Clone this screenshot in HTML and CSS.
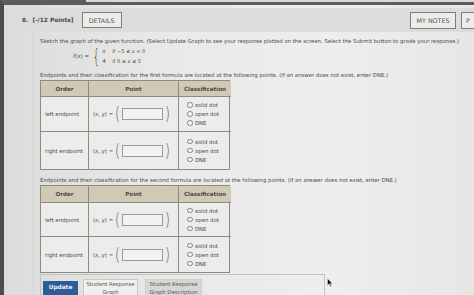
FILE: index.html
```html
<!DOCTYPE html>
<html>
<head>
<meta charset="utf-8">
<link rel="stylesheet" href="styles.css">
</head>
<body>
<div class="screen">
  <div class="topglare"></div>
  <div class="question">
    <div class="qhead">
      <span class="qnum">8.&nbsp; [-/12 Points]</span>
      <span class="btn details">DETAILS</span>
      <span class="spacer"></span>
      <span class="btn notes">MY NOTES</span>
      <span class="btn pbtn">P</span>
    </div>
    <div class="content">
      <p class="line first">Sketch the graph of the given function. (Select Update Graph to see your response plotted on the screen. Select the Submit button to grade your response.)</p>
      <div class="formula">
        <span class="fx"><i>f</i>(<i>x</i>) =</span>
        <span class="brace">{</span>
        <div class="cases">
          <div class="case"><span class="cv"><i>x</i></span><span class="cc">if &minus;5 &le; <i>x</i> &lt; 0</span></div>
          <div class="case"><span class="cv">4</span><span class="cc">if 0 &le; <i>x</i> &le; 5</span></div>
        </div>
      </div>
      <p class="line">Endpoints and their classification for the first formula are located at the following points. (If an answer does not exist, enter DNE.)</p>
      <div class="tbl">
        <div class="th c1">Order</div><div class="th c2">Point</div><div class="th c3">Classification</div>
        <div class="td c1 r1">left endpoint</div>
        <div class="td c2 r1"><span class="xy">(<i>x</i>, <i>y</i>) =</span><span class="par">(</span><span class="box"></span><span class="par">)</span></div>
        <div class="td c3 r1 radios"><span class="rad"><b></b>solid dot</span><span class="rad"><b></b>open dot</span><span class="rad"><b></b>DNE</span></div>
        <div class="td c1 r2">right endpoint</div>
        <div class="td c2 r2"><span class="xy">(<i>x</i>, <i>y</i>) =</span><span class="par">(</span><span class="box"></span><span class="par">)</span></div>
        <div class="td c3 r2 radios"><span class="rad"><b></b>solid dot</span><span class="rad"><b></b>open dot</span><span class="rad"><b></b>DNE</span></div>
      </div>
      <p class="line second">Endpoints and their classification for the second formula are located at the following points. (If an answer does not exist, enter DNE.)</p>
      <div class="tbl t2">
        <div class="th c1">Order</div><div class="th c2">Point</div><div class="th c3">Classification</div>
        <div class="td c1 r1">left endpoint</div>
        <div class="td c2 r1"><span class="xy">(<i>x</i>, <i>y</i>) =</span><span class="par">(</span><span class="box"></span><span class="par">)</span></div>
        <div class="td c3 r1 radios"><span class="rad"><b></b>solid dot</span><span class="rad"><b></b>open dot</span><span class="rad"><b></b>DNE</span></div>
        <div class="td c1 r2">right endpoint</div>
        <div class="td c2 r2"><span class="xy">(<i>x</i>, <i>y</i>) =</span><span class="par">(</span><span class="box"></span><span class="par">)</span></div>
        <div class="td c3 r2 radios"><span class="rad"><b></b>solid dot</span><span class="rad"><b></b>open dot</span><span class="rad"><b></b>DNE</span></div>
      </div>
      <div class="graphbar">
        <span class="update">Update</span>
        <span class="gbtn srg">Student Response<br>Graph</span>
        <span class="gbtn srgd">Student Response<br>Graph Description</span>
        <svg class="cursor" width="6" height="9" viewBox="0 0 6 9"><path d="M0.5 0.5 L0.5 7.5 L2.2 5.8 L3.5 8.5 L4.5 8 L3.3 5.4 L5.5 5.4 Z" fill="#111" stroke="#fff" stroke-width="0.4"/></svg>
      </div>
    </div>
  </div>
</div>
</body>
</html>
```

FILE: styles.css
```css
html, body {
  margin: 0;
  padding: 0;
}
body {
  width: 474px;
  height: 295px;
  overflow: hidden;
  background: #e6e6e4;
  font-family: "DejaVu Sans", Verdana, sans-serif;
  color: #4a4a48;
}
.screen {
  position: relative;
  height: 295px;
  box-sizing: border-box;
  border-left: 4px solid #4c4c4c;
  border-top: 5px solid #5c5c5a;
  background: linear-gradient(90deg, #dcdcda 0%, #e9e9e7 35%, #eeeeec 70%, #e6e6e4 100%);
}
.topglare {
  position: absolute;
  top: -5px;
  left: 82px;
  right: 0;
  height: 2px;
  background: #d8d8d6;
}
.question {
  margin-left: 11px;
  padding-top: 3px;
}
.qhead {
  display: flex;
  align-items: center;
  height: 24px;
  background: #dcdcda;
  padding-left: 7px;
}
.qnum {
  font-size: 5.9px;
  font-weight: bold;
  color: #4a4a48;
}
.btn {
  display: flex;
  align-items: center;
  justify-content: center;
  box-sizing: border-box;
  height: 16px;
  border: 1px solid #7e7e7c;
  background: #ececea;
  font-size: 6.3px;
  color: #55554f;
}
.details {
  margin-left: 8px;
  width: 40px;
}
.spacer { flex: 1; }
.notes {
  width: 46px;
  height: 17px;
}
.pbtn {
  margin-left: 5px;
  width: 13px;
  height: 17px;
  justify-content: flex-start;
  padding-left: 4px;
  border-right: none;
}
.content {
  margin-left: 18px;
  border-left: 1px solid #d2d2d0;
  padding-left: 6px;
  padding-top: 5px;
  height: 270px;
}
.line {
  margin: 0;
  font-size: 5.35px;
  line-height: 8px;
  white-space: nowrap;
  color: #4a4a48;
}
.formula {
  display: flex;
  align-items: center;
  height: 20px;
  margin-left: 33px;
  margin-top: 1px;
  margin-bottom: 5px;
  font-size: 5.6px;
  color: #4a4a48;
}
.fx { margin-right: 1px; }
.brace {
  font-size: 19px;
  line-height: 20px;
  font-weight: 200;
  transform: scaleX(0.6);
  margin-right: 0;
}
.cases {
  display: flex;
  flex-direction: column;
  gap: 3px;
}
.case { display: flex; line-height: 7px; }
.cv { width: 10px; }
.cc { font-size: 5px; }
.tbl {
  display: grid;
  grid-template-columns: 48px 90px 52px;
  grid-template-rows: 16px 35px 37px;
  width: 190px;
  margin-top: 1px;
  border: 1px solid #8c8a84;
  box-sizing: border-box;
  background: #ececea;
}
.t2 { grid-template-rows: 17px 34px 35px; }
.th {
  background: #d0c9b6;
  font-size: 5.6px;
  font-weight: bold;
  color: #4b4a45;
  display: flex;
  align-items: center;
  justify-content: center;
  border-bottom: 1px solid #8c8a84;
}
.td {
  display: flex;
  align-items: center;
  font-size: 5.35px;
  color: #4a4a48;
}
.c1, .c2 { border-right: 1px solid #8c8a84; }
.r1 { border-bottom: 1px solid #8c8a84; }
.td.c1 { padding-left: 4px; }
.td.c2 { padding-left: 4px; }
.xy { margin-right: 1px; }
.par {
  font-size: 18px;
  font-weight: 200;
  line-height: 20px;
  color: #555;
  transform: scaleX(0.7);
}
.box {
  width: 41px;
  height: 12px;
  box-sizing: border-box;
  border: 1px solid #9a9a98;
  background: #f2f2f0;
  margin: 0 1px;
}
.radios {
  flex-direction: column;
  align-items: flex-start;
  justify-content: center;
  padding-left: 8px;
  gap: 1.5px;
}
.rad {
  display: flex;
  align-items: center;
  height: 7.5px;
  font-size: 5.35px;
}
.rad b {
  width: 5.5px;
  height: 5.5px;
  box-sizing: border-box;
  border: 0.7px solid #808080;
  border-radius: 50%;
  background: #f4f4f2;
  margin-right: 2.5px;
}
.second { margin-top: 6px; margin-bottom: 0; }
.graphbar {
  position: relative;
  display: flex;
  align-items: flex-start;
  gap: 5px;
  margin-top: 1px;
  width: 285px;
  height: 22px;
  box-sizing: border-box;
  border-top: 1px solid #c2c2c0;
  border-left: 1px solid #c2c2c0;
  border-right: 1px solid #c2c2c0;
  padding: 6px 0 0 2px;
}
.update {
  display: flex;
  justify-content: center;
  width: 35px;
  height: 16px;
  padding-top: 3px;
  box-sizing: border-box;
  background: #2d5c98;
  color: #f0f4fa;
  font-size: 5.8px;
  font-weight: bold;
}
.gbtn {
  box-sizing: border-box;
  height: 17px;
  padding-top: 1px;
  text-align: center;
  font-size: 5.3px;
  line-height: 7.5px;
  color: #55554f;
  border: 1px solid #c8c8c6;
  background: #efefed;
}
.srg { width: 55px; margin-top: -2px; }
.srgd { width: 57px; margin-left: 2px; margin-top: -2px; background: #d6d6d4; border-color: #cfcfcd; }
.cursor {
  position: absolute;
  left: 286px;
  top: 3px;
}
```
